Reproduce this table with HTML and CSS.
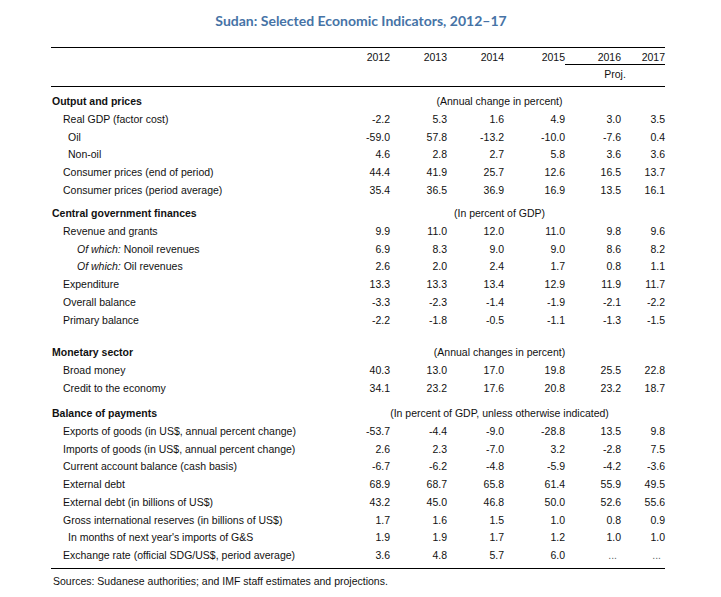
FILE: index.html
```html
<!DOCTYPE html>
<html lang="en">
<head>
<meta charset="utf-8">
<title>Sudan: Selected Economic Indicators, 2012–17</title>
<link rel="stylesheet" href="styles.css">
</head>
<body>
<div class="page">
  <h1 class="title">Sudan: Selected Economic Indicators, 2012–17</h1>
  <div class="tbl">
    <div class="thead">
      <span class="lab"></span>
      <span class="num">2012</span>
      <span class="num">2013</span>
      <span class="num">2014</span>
      <span class="num">2015</span>
      <span class="num uline">2016</span>
      <span class="num uline">2017</span>
      <span class="proj">Proj.</span>
    </div>
    <div class="tbody">
      <div class="section">
        <div class="row"><span class="lab b">Output and prices</span><span class="unit">(Annual change in percent)</span></div>
        <div class="row"><span class="lab l1">Real GDP (factor cost)</span><span class="num">-2.2</span><span class="num">5.3</span><span class="num">1.6</span><span class="num">4.9</span><span class="num">3.0</span><span class="num">3.5</span></div>
        <div class="row"><span class="lab l2">Oil</span><span class="num">-59.0</span><span class="num">57.8</span><span class="num">-13.2</span><span class="num">-10.0</span><span class="num">-7.6</span><span class="num">0.4</span></div>
        <div class="row"><span class="lab l2">Non-oil</span><span class="num">4.6</span><span class="num">2.8</span><span class="num">2.7</span><span class="num">5.8</span><span class="num">3.6</span><span class="num">3.6</span></div>
        <div class="row"><span class="lab l1">Consumer prices (end of period)</span><span class="num">44.4</span><span class="num">41.9</span><span class="num">25.7</span><span class="num">12.6</span><span class="num">16.5</span><span class="num">13.7</span></div>
        <div class="row"><span class="lab l1">Consumer prices (period average)</span><span class="num">35.4</span><span class="num">36.5</span><span class="num">36.9</span><span class="num">16.9</span><span class="num">13.5</span><span class="num">16.1</span></div>
      </div>
      <div class="section gap-a">
        <div class="row"><span class="lab b">Central government finances</span><span class="unit">(In percent of GDP)</span></div>
        <div class="row"><span class="lab l1">Revenue and grants</span><span class="num">9.9</span><span class="num">11.0</span><span class="num">12.0</span><span class="num">11.0</span><span class="num">9.8</span><span class="num">9.6</span></div>
        <div class="row"><span class="lab l3"><i>Of which:</i> Nonoil revenues</span><span class="num">6.9</span><span class="num">8.3</span><span class="num">9.0</span><span class="num">9.0</span><span class="num">8.6</span><span class="num">8.2</span></div>
        <div class="row"><span class="lab l3"><i>Of which:</i> Oil revenues</span><span class="num">2.6</span><span class="num">2.0</span><span class="num">2.4</span><span class="num">1.7</span><span class="num">0.8</span><span class="num">1.1</span></div>
        <div class="row"><span class="lab l1">Expenditure</span><span class="num">13.3</span><span class="num">13.3</span><span class="num">13.4</span><span class="num">12.9</span><span class="num">11.9</span><span class="num">11.7</span></div>
        <div class="row"><span class="lab l1">Overall balance</span><span class="num">-3.3</span><span class="num">-2.3</span><span class="num">-1.4</span><span class="num">-1.9</span><span class="num">-2.1</span><span class="num">-2.2</span></div>
        <div class="row"><span class="lab l1">Primary balance</span><span class="num">-2.2</span><span class="num">-1.8</span><span class="num">-0.5</span><span class="num">-1.1</span><span class="num">-1.3</span><span class="num">-1.5</span></div>
      </div>
      <div class="section gap-b">
        <div class="row"><span class="lab b">Monetary sector</span><span class="unit">(Annual changes in percent)</span></div>
        <div class="row"><span class="lab l1">Broad money</span><span class="num">40.3</span><span class="num">13.0</span><span class="num">17.0</span><span class="num">19.8</span><span class="num">25.5</span><span class="num">22.8</span></div>
        <div class="row"><span class="lab l1">Credit to the economy</span><span class="num">34.1</span><span class="num">23.2</span><span class="num">17.6</span><span class="num">20.8</span><span class="num">23.2</span><span class="num">18.7</span></div>
      </div>
      <div class="section gap-c">
        <div class="row"><span class="lab b">Balance of payments</span><span class="unit">(In percent of GDP, unless otherwise indicated)</span></div>
        <div class="row"><span class="lab l1">Exports of goods (in US$, annual percent change)</span><span class="num">-53.7</span><span class="num">-4.4</span><span class="num">-9.0</span><span class="num">-28.8</span><span class="num">13.5</span><span class="num">9.8</span></div>
        <div class="row"><span class="lab l1">Imports of goods (in US$, annual percent change)</span><span class="num">2.6</span><span class="num">2.3</span><span class="num">-7.0</span><span class="num">3.2</span><span class="num">-2.8</span><span class="num">7.5</span></div>
        <div class="row"><span class="lab l1">Current account balance (cash basis)</span><span class="num">-6.7</span><span class="num">-6.2</span><span class="num">-4.8</span><span class="num">-5.9</span><span class="num">-4.2</span><span class="num">-3.6</span></div>
        <div class="row"><span class="lab l1">External debt</span><span class="num">68.9</span><span class="num">68.7</span><span class="num">65.8</span><span class="num">61.4</span><span class="num">55.9</span><span class="num">49.5</span></div>
        <div class="row"><span class="lab l1">External debt (in billions of US$)</span><span class="num">43.2</span><span class="num">45.0</span><span class="num">46.8</span><span class="num">50.0</span><span class="num">52.6</span><span class="num">55.6</span></div>
        <div class="row"><span class="lab l1">Gross international reserves (in billions of US$)</span><span class="num">1.7</span><span class="num">1.6</span><span class="num">1.5</span><span class="num">1.0</span><span class="num">0.8</span><span class="num">0.9</span></div>
        <div class="row"><span class="lab l2">In months of next year's imports of G&amp;S</span><span class="num">1.9</span><span class="num">1.9</span><span class="num">1.7</span><span class="num">1.2</span><span class="num">1.0</span><span class="num">1.0</span></div>
        <div class="row"><span class="lab l1">Exchange rate (official SDG/US$, period average)</span><span class="num">3.6</span><span class="num">4.8</span><span class="num">5.7</span><span class="num">6.0</span><span class="num dots">...</span><span class="num dots">...</span></div>
      </div>
    </div>
    <p class="sources">Sources: Sudanese authorities; and IMF staff estimates and projections.</p>
  </div>
</div>
</body>
</html>
```
FILE: styles.css
```css
body {
  margin: 0;
  background: #fff;
  color: #111;
  font-family: "Liberation Sans", Arial, sans-serif;
  font-size: 10.5px;
}

.page {
  padding: 11px 0 0 51px;
  width: 614px;
}

.title {
  margin: 0 0 16px;
  padding-left: 6px;
  font-family: Lato, "Open Sans", sans-serif;
  font-weight: 700;
  font-size: 14px;
  line-height: 20px;
  color: #4673a6;
  text-align: center;
}

.thead,
.row {
  display: grid;
  grid-template-columns: 284px 55px 57px 57px 61px 56px 44px;
}

.thead {
  grid-template-rows: 17px 17px;
  border-top: 1px solid #000;
  border-bottom: 1px solid #000;
  padding-bottom: 4px;
  line-height: 16px;
}

.thead .num {
  padding-top: 1px;
  line-height: 16px;
}

.uline {
  border-bottom: 1px solid #000;
}

.proj {
  grid-column: 6 / 8;
  grid-row: 2;
  text-align: center;
  line-height: 18px;
}

.tbody {
  padding-top: 6px;
  padding-bottom: 3px;
  border-bottom: 1px solid #000;
}

.row {
  height: 17.75px;
  line-height: 17.75px;
  white-space: nowrap;
}

.gap-a { margin-top: 5.5px; }
.gap-b { margin-top: 14.75px; }
.gap-c { margin-top: 7.75px; }

.lab { padding-left: 1px; }
.b { font-weight: 700; }
.l1 { padding-left: 12px; }
.l2 { padding-left: 17px; }
.l3 { padding-left: 26px; }

.unit {
  grid-column: 2 / 8;
  text-align: center;
  padding-right: 1px;
}

.num {
  text-align: right;
}

.dots {
  color: #666;
  padding-right: 4px;
}

.sources {
  margin: 0;
  padding: 4px 0 0 2px;
  line-height: 16px;
}
```
